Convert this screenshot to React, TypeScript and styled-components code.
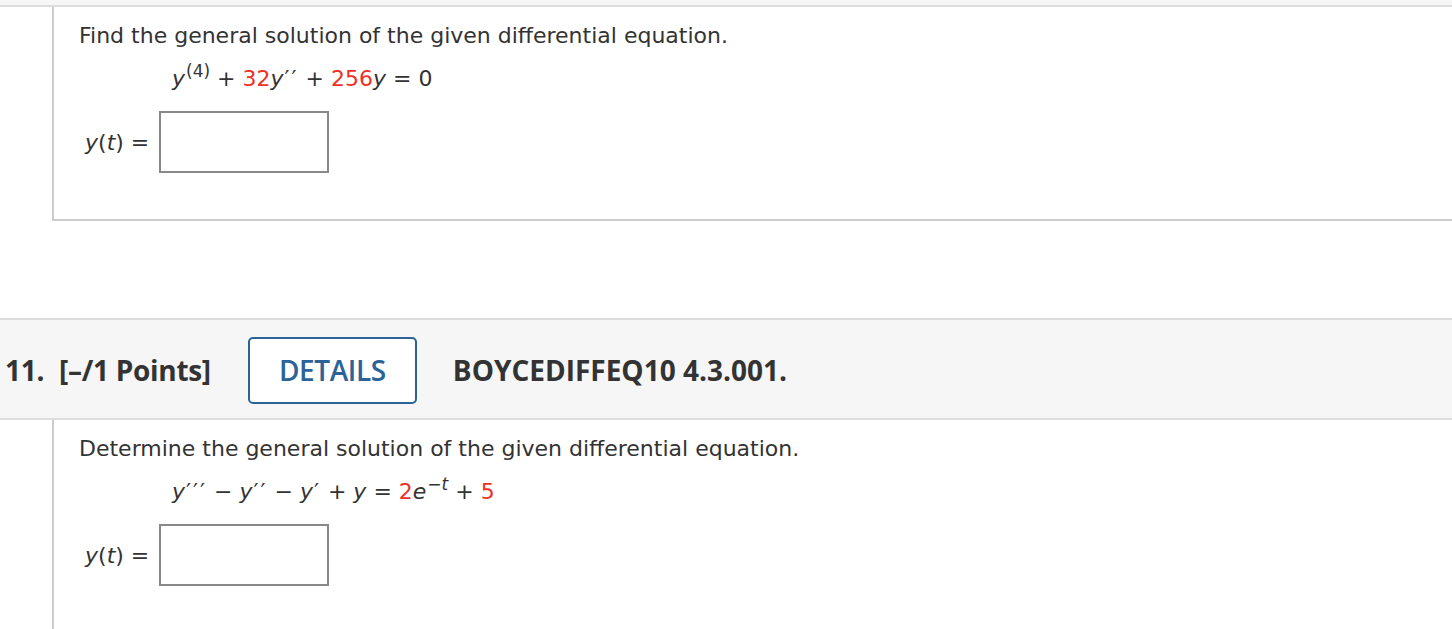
import styled, { createGlobalStyle } from 'styled-components'

const GlobalStyle = createGlobalStyle`
  html, body {
    margin: 0;
    padding: 0;
    background: #ffffff;
  }
`

const Page = styled.div`
  width: 1452px;
  height: 629px;
  overflow: hidden;
  font-family: "DejaVu Sans", Verdana, sans-serif;
  color: #333333;
`

const TopStrip = styled.div`
  height: 5px;
  background: #f6f6f6;
  border-bottom: 2px solid #dddddd;
`

const QuestionBody = styled.div<{ $closed?: boolean }>`
  margin-left: 52px;
  border-left: 2px solid #cccccc;
  border-bottom: ${(p) => (p.$closed ? '2px solid #cccccc' : 'none')};
  padding: 16px 0 0 25px;
  height: ${(p) => (p.$closed ? '214px' : 'auto')};
  min-height: 209px;
  box-sizing: border-box;
`

const Prompt = styled.p`
  margin: 0;
  font-size: 22px;
  line-height: 26px;
  color: #333333;
`

const Equation = styled.div`
  margin: 17px 0 0 93px;
  font-size: 22px;
  line-height: 26px;
  color: #333333;
  white-space: pre;
`

const Var = styled.i`
  font-style: italic;
`

const Prime = styled.span`
  letter-spacing: 2px;
  margin-left: 1px;
`

const Coef = styled.span`
  color: #ee3124;
`

const Sup = styled.sup`
  font-size: 17px;
  line-height: 0;
  vertical-align: 9px;
  margin-left: 1px;
`

const AnswerRow = styled.div`
  display: flex;
  align-items: center;
  margin: 19px 0 0 6px;
`

const AnswerLabel = styled.span`
  font-size: 22px;
  color: #333333;
  margin-right: 10px;
  white-space: pre;
`

const AnswerBox = styled.input`
  width: 170px;
  height: 62px;
  box-sizing: border-box;
  border: 2px solid #888888;
  background: #ffffff;
  margin: 0;
  padding: 0;
`

const Gap = styled.div`
  height: 97px;
`

const Header = styled.div`
  display: flex;
  align-items: center;
  height: 102px;
  box-sizing: border-box;
  background: #f6f6f6;
  border-top: 2px solid #dddddd;
  border-bottom: 2px solid #dddddd;
  padding: 2px 0 0 5px;
  font-family: "Open Sans", "Liberation Sans", sans-serif;
  font-weight: 700;
  font-size: 28px;
  color: #333333;
  letter-spacing: -0.3px;
`

const Number = styled.span`
  margin-right: 15px;
`

const Points = styled.span`
  margin-right: 37px;
`

const DetailsButton = styled.button`
  width: 169px;
  height: 67px;
  box-sizing: border-box;
  border: 2px solid #2b6399;
  border-radius: 5px;
  background: #ffffff;
  color: #2b6399;
  font-family: "Open Sans", "Liberation Sans", sans-serif;
  font-weight: 600;
  font-size: 28px;
  letter-spacing: -0.4px;
  margin-right: 36px;
  padding: 0;
`

const Ref = styled.span`
  letter-spacing: 0;
`

export default function App() {
  return (
    <Page>
      <GlobalStyle />
      <TopStrip />
      <QuestionBody $closed>
        <Prompt>Find the general solution of the given differential equation.</Prompt>
        <Equation>
          <Var>y</Var>
          <Sup>(4)</Sup>
          {' + '}
          <Coef>32</Coef>
          <Var>y</Var>
          <Prime>′′</Prime>
          {' + '}
          <Coef>256</Coef>
          <Var>y</Var>
          {' = 0'}
        </Equation>
        <AnswerRow>
          <AnswerLabel>
            <Var>y</Var>(<Var>t</Var>) =
          </AnswerLabel>
          <AnswerBox type="text" />
        </AnswerRow>
      </QuestionBody>
      <Gap />
      <Header>
        <Number>11.</Number>
        <Points>[–/1 Points]</Points>
        <DetailsButton>DETAILS</DetailsButton>
        <Ref>BOYCEDIFFEQ10 4.3.001.</Ref>
      </Header>
      <QuestionBody>
        <Prompt>Determine the general solution of the given differential equation.</Prompt>
        <Equation>
          <Var>y</Var>
          <Prime>′′′</Prime>
          {' − '}
          <Var>y</Var>
          <Prime>′′</Prime>
          {' − '}
          <Var>y</Var>
          <Prime>′</Prime>
          {' + '}
          <Var>y</Var>
          {' = '}
          <Coef>2</Coef>
          <Var>e</Var>
          <Sup>
            −<Var>t</Var>
          </Sup>
          {' + '}
          <Coef>5</Coef>
        </Equation>
        <AnswerRow>
          <AnswerLabel>
            <Var>y</Var>(<Var>t</Var>) =
          </AnswerLabel>
          <AnswerBox type="text" />
        </AnswerRow>
      </QuestionBody>
    </Page>
  )
}
